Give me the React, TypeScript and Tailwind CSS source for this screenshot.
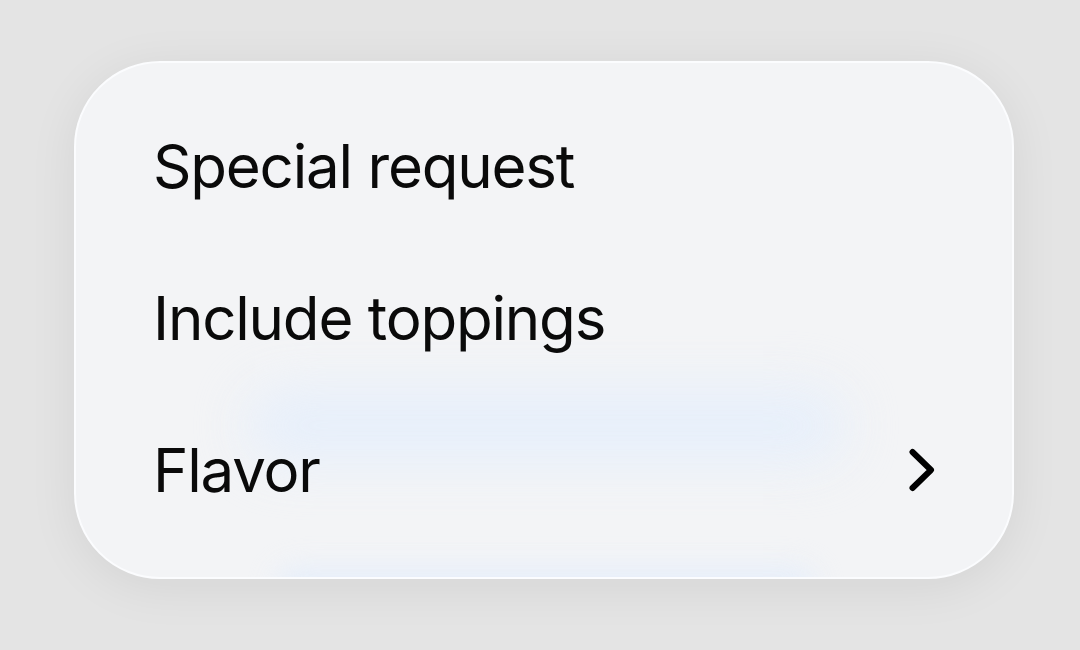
import React from "react";

const Chevron = () => (
  <svg width="28" height="44" viewBox="0 0 28 44" fill="none">
    <path d="M4.5 4 L23 22 L4.5 40" stroke="#000" strokeWidth="6" strokeLinecap="round" strokeLinejoin="round" />
  </svg>
);

export default function App() {
  const rows = ["Special request", "Include toppings", "Flavor"];
  return (
    <div
      className="w-[1080px] h-[650px] bg-[#e4e4e4] overflow-hidden pt-[61px] pl-[74px]"
      style={{ fontFamily: "Inter, 'Liberation Sans', sans-serif" }}
    >
      <div className="relative w-[940px] h-[518px] rounded-[86px] bg-[#f3f4f6] border-2 border-[#fbfcfe] shadow-[0_8px_50px_rgba(0,0,0,0.07)] overflow-hidden">
        <div className="absolute left-[170px] top-[325px] w-[600px] h-[75px] rounded-full bg-[#e4eefc] blur-[26px] opacity-80" />
        <div className="absolute left-[200px] bottom-[-30px] w-[540px] h-[40px] rounded-full bg-[#e3edfb] blur-[14px] opacity-80" />
        <div className="relative flex flex-col pt-[27px] pl-[77px] pr-[76px]">
          {rows.map((r, i) => (
            <div key={r} className="h-[152px] flex items-center justify-between">
              <span className="text-[60px] leading-[152px] text-[#0a0a0a] tracking-[-1.2px]">{r}</span>
              {i === 2 && <Chevron />}
            </div>
          ))}
        </div>
      </div>
    </div>
  );
}
